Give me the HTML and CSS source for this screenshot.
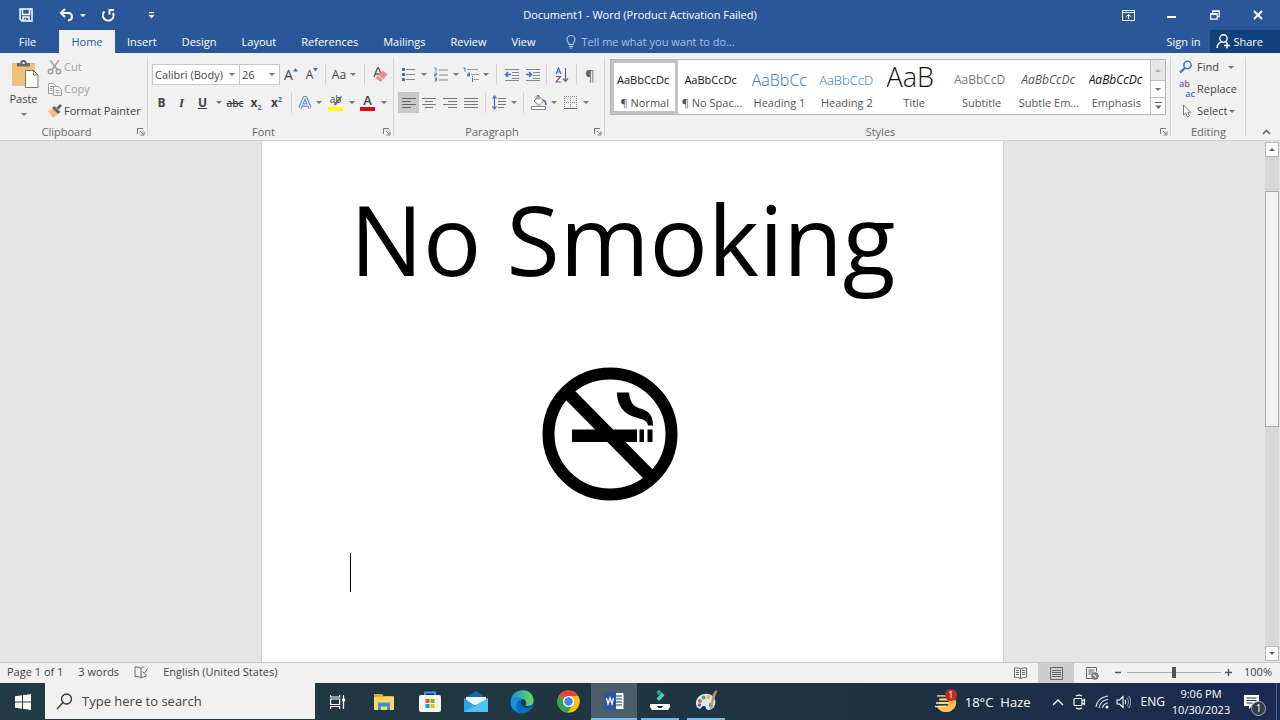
FILE: index.html
```html
<!DOCTYPE html>
<html lang="en">
<head>
<meta charset="utf-8">
<title>Document1 - Word</title>
<link rel="stylesheet" href="styles.css">
</head>
<body>
<header class="titlebar">
  <div class="quick">
    <button aria-label="Save"><svg width="14" height="14" viewBox="0 0 14 14" fill="none" stroke="#fff" stroke-width="1.5"><path d="M1 1h12v12H3L1 11z"/><path d="M3.500 1v5.500h7V1M4 13V9h6v4M6.500 10.500v2"/></svg></button>
    <button aria-label="Undo"><svg width="15" height="14" viewBox="0 0 15 14" fill="none" stroke="#fff" stroke-width="2"><path d="M6 1L2 5l4 4M2.500 5H9c5 0 5.500 7 0 7.500"/></svg></button>
    <button class="narrow" aria-label="Undo options"><i class="arrow"></i></button>
    <button aria-label="Redo"><svg width="15" height="15" viewBox="0 0 15 15" fill="none" stroke="#fff" stroke-width="2"><path d="M3.500 3.500A5.300 5.300 0 1 0 12 5M8.500 6.500V2H13"/></svg></button>
    <button aria-label="Customize toolbar"><svg width="7" height="7" viewBox="0 0 7 7" fill="#fff"><path d="M1 0h5v1.200H1zM0.500 3h6L3.500 6.500z"/></svg></button>
  </div>
  <h1 class="title">Document1 - Word (Product Activation Failed)</h1>
  <div class="window">
    <button aria-label="Ribbon display options"><svg width="13" height="11" viewBox="0 0 13 11" fill="none" stroke="#fff"><path d="M.5.5h12v10H.5zM.5 2.500h12M6.500 9V4.500M4.200 6.700l2.300-2.300 2.300 2.300"/></svg></button>
    <button aria-label="Minimize"><svg width="9" height="10" viewBox="0 0 9 10"><path d="M0 6h9v2H0z" fill="#fff"/></svg></button>
    <button aria-label="Restore"><svg width="10" height="10" viewBox="0 0 10 10" fill="none" stroke="#fff" stroke-width="1.200"><path d="M.6 3.600h6.500v5.500H.6zM.6 4.500h6.500M2.600 3V.8h6.600v5.800H7.500M2.600 1.500h6.600"/></svg></button>
    <button aria-label="Close"><svg width="10" height="10" viewBox="0 0 10 10"><path d="M1 1l8 8M9 1L1 9" stroke="#fff" stroke-width="2"/></svg></button>
  </div>
</header>
<nav class="tabs">
  <button class="file">File</button>
  <button class="active">Home</button>
  <button>Insert</button>
  <button>Design</button>
  <button>Layout</button>
  <button>References</button>
  <button>Mailings</button>
  <button>Review</button>
  <button>View</button>
  <label class="tell"><svg width="10" height="14" viewBox="0 0 10 14" fill="none" stroke="#a9c0e2" stroke-width="1.200"><path d="M3 9.500C3 7.500 1 7 1 4.500a4 4 0 0 1 8 0C9 7 7 7.500 7 9.500zM3 11.300h4M3.500 13h3"/></svg><input aria-label="Tell me" placeholder="Tell me what you want to do..."></label>
  <button class="sign">Sign in</button>
  <button class="share"><svg width="15" height="15" viewBox="0 0 15 15" fill="none" stroke="#fff" stroke-width="1.400"><circle cx="7.500" cy="4.500" r="3.700"/><path d="M1 14c.3-3.500 2-5.500 4.500-6.200M9.500 8l1.500 1.500M11 8.500v6M8 11.500h6"/></svg>Share</button>
</nav>
<section class="ribbon">
  <div class="group clipboard">
    <div class="body">
      <button class="paste"><svg width="28" height="30" viewBox="0 0 28 30"><path d="M1 4h23v23H1z" fill="#ecc27b"/><path d="M6 4h3.500V2.500L11 1h3l1.500 1.500V4H19v3.500H6z" fill="#6a6a6a"/><path d="M11.500 3h2v2h-2z" fill="#f1f1f1"/><path d="M14.500 11.500h8l4.500 4.500v12.500H14.500z" fill="#fff" stroke="#777"/><path d="M22.500 11.500V16H27" fill="none" stroke="#777"/></svg><span>Paste</span><i class="arrow"></i></button>
      <div class="list">
        <button class="off"><svg width="16" height="15" viewBox="0 0 16 15" fill="none" stroke="#a0a0a0" stroke-width="1.500"><path d="M3 0l7.500 10M12 0L5 10"/><circle cx="3.500" cy="11.500" r="2.200"/><circle cx="11.500" cy="11.500" r="2.200"/></svg>Cut</button>
        <button class="off"><svg width="16" height="15" viewBox="0 0 16 15" fill="#f5f5f5" stroke="#a0a0a0"><path d="M1.500 1.500h5l2 2v8h-7z"/><path d="M6.500 4.500h5l3 3v6h-8zM3 4.500h3M3 6.500h3M3 8.500h3M8.500 8.500h4M8.500 10.500h4"/></svg>Copy</button>
        <button><svg width="16" height="15" viewBox="0 0 16 15"><path d="M1 7l5-2 5 5-5 4z" fill="#ecc27b"/><path d="M5 4l2.500-2 6 6L11 10zM9.500 3.500L13 0l2 2-3.500 3.500z" fill="#666"/></svg>Format Painter</button>
      </div>
    </div>
    <footer><span>Clipboard</span><button class="launch" aria-label="Clipboard settings"><svg width="8" height="8" viewBox="0 0 8 8" fill="none" stroke="#777"><path d="M.5 6V.5H6M3 3l3 3M7 3.500V7H3.500"/></svg></button></footer>
  </div>

  <div class="group font">
    <div class="body rows">
      <div class="row font-a">
        <label class="combo"><select aria-label="Font"><option>Calibri (Body)</option></select><i class="arrow"></i></label>
        <label class="combo size"><select aria-label="Font size"><option>26</option></select><i class="arrow"></i></label>
        <button class="grow" aria-label="Grow font">A<svg width="5" height="4" viewBox="0 0 5 4"><path d="M0 3.500L2.500 0 5 3.500z" fill="#3e6db5"/></svg></button>
        <button class="grow shrink" aria-label="Shrink font">A<svg width="5" height="4" viewBox="0 0 5 4"><path d="M0 0h5L2.500 3.500z" fill="#3e6db5"/></svg></button>
        <i class="sep"></i>
        <button class="case">Aa<i class="arrow"></i></button>
        <i class="sep"></i>
        <button aria-label="Clear formatting"><svg width="16" height="16" viewBox="0 0 16 16"><path d="M2 10L5.500 1h1L9 7M3.500 7h4" fill="none" stroke="#555" stroke-width="1.300"/><path d="M10.500 3.500l5 4-7 7.500-5-4z" fill="#ec8797"/><path d="M6 8.500l5 4" stroke="#fff"/></svg></button>
      </div>
      <div class="row font-b">
        <button class="b">B</button><button class="i">I</button><button class="u">U</button><button aria-label="Underline options"><i class="arrow"></i></button>
        <button class="strike">abc</button><button class="b">x<sub>2</sub></button><button class="b">x<sup>2</sup></button><i class="sep"></i>
        <button aria-label="Text effects"><svg width="14" height="14" viewBox="0 0 14 14" fill="none" stroke-linejoin="round"><path d="M2 12L6.500 1.500h1L12 12M4 9h6" stroke="#5a8fcc" stroke-width="3.500"/><path d="M2 12L6.500 1.500h1L12 12M4 9h6" stroke="#fff" stroke-width="1.200"/></svg></button><button aria-label="Effects options"><i class="arrow"></i></button>
        <button class="marker" aria-label="Highlight">ab<svg width="16" height="15" viewBox="0 0 16 15"><path d="M0 11h15v4H0z" fill="#ffff00"/><path d="M14 1L8 9l-2 .5.500-2.500L13 0z" fill="#666"/></svg></button><button aria-label="Highlight options"><i class="arrow"></i></button>
        <button class="color">A</button><button aria-label="Color options"><i class="arrow"></i></button>
      </div>
    </div>
    <footer><span>Font</span><button class="launch" aria-label="Font settings"><svg width="8" height="8" viewBox="0 0 8 8" fill="none" stroke="#777"><path d="M.5 6V.5H6M3 3l3 3M7 3.500V7H3.500"/></svg></button></footer>
  </div>

  <div class="group para">
    <div class="body rows">
      <div class="row para-a">
        <button aria-label="Bullets"><svg width="14" height="15" viewBox="0 0 14 15"><path d="M5 2.500h9M5 7.500h9M5 12.500h9" stroke="#888"/><path d="M1 1h3v3H1zM1 6h3v3H1zM1 11h3v3H1z" fill="#3e6db5"/></svg></button><button aria-label="Bullet options"><i class="arrow"></i></button>
        <button aria-label="Numbering"><svg width="14" height="15" viewBox="0 0 14 15"><path d="M5 3h9M5 8h9M5 13h9" stroke="#888"/><path d="M.5 1H2v3.500M.5 6h2v1.500h-2V9h2M.5 11h2v3h-2M1 12.500h1" fill="none" stroke="#3e6db5" stroke-width=".9"/></svg></button><button aria-label="Number options"><i class="arrow"></i></button>
        <button aria-label="Multilevel list"><svg width="16" height="15" viewBox="0 0 16 15"><path d="M4 2.500h11M8 7.500h8M11 12.500h5" stroke="#999"/><path d="M.5 1H2v3.500M4.500 6h2v3h-2V7.500h2M9.500 9v1M9.500 11v4" fill="none" stroke="#3e6db5"/></svg></button><button aria-label="List options"><i class="arrow"></i></button>
        <i class="sep"></i>
        <button aria-label="Decrease indent"><svg width="16" height="14" viewBox="0 0 16 14"><path d="M1 1.500h14M8 4.500h7M8 7.500h7M8 10.500h7M1 12.500h14" stroke="#888"/><path d="M7 6.500H2M4 4L1.500 6.500 4 9" fill="none" stroke="#3e6db5" stroke-width="1.500"/></svg></button>
        <button aria-label="Increase indent"><svg width="16" height="14" viewBox="0 0 16 14"><path d="M1 1.500h14M8 4.500h7M8 7.500h7M8 10.500h7M1 12.500h14" stroke="#888"/><path d="M1 6.500h5M4 4l2.500 2.500L4 9" fill="none" stroke="#3e6db5" stroke-width="1.500"/></svg></button>
        <i class="sep"></i>
        <button aria-label="Sort"><svg width="14" height="16" viewBox="0 0 14 16" fill="none"><path d="M1 7l2.500-6L6 7M2 5h3" stroke="#3e6db5" stroke-width="1.200"/><path d="M1 9.500h4.500L1 15h5" stroke="#8a55a5" stroke-width="1.200"/><path d="M10.500 1v13M8 11.500l2.500 3 2.500-3" stroke="#666" stroke-width="1.200"/></svg></button>
        <i class="sep"></i>
        <button class="mark">¶</button>
      </div>
      <div class="row para-b">
        <button class="on" aria-label="Align left"><svg width="14" height="12" viewBox="0 0 14 12"><path d="M0 1.500h14M0 4.500h9M0 7.500h14M0 10.500h9" stroke="#666"/></svg></button>
        <button aria-label="Center"><svg width="14" height="12" viewBox="0 0 14 12"><path d="M0 1.500h14M3 4.500h8M0 7.500h14M3 10.500h8" stroke="#777"/></svg></button>
        <button aria-label="Align right"><svg width="14" height="12" viewBox="0 0 14 12"><path d="M0 1.500h14M5 4.500h9M0 7.500h14M5 10.500h9" stroke="#777"/></svg></button>
        <button aria-label="Justify"><svg width="14" height="12" viewBox="0 0 14 12"><path d="M0 1.500h14M0 4.500h14M0 7.500h14M0 10.500h14" stroke="#777"/></svg></button>
        <i class="sep"></i>
        <button aria-label="Line spacing"><svg width="14" height="15" viewBox="0 0 14 15"><path d="M6 3.500h8M6 6.500h8M6 9.500h8M6 12.500h6" stroke="#777"/><path d="M2.500 1v13M.5 3.500l2-2.500 2 2.500M.5 11.500l2 2.500 2-2.500" fill="none" stroke="#3e6db5" stroke-width="1.200"/></svg></button><button aria-label="Spacing options"><i class="arrow"></i></button>
        <i class="sep"></i>
        <button aria-label="Shading"><svg width="16" height="15" viewBox="0 0 16 15"><path d="M3 6l5-4.500L12.500 6 8 10.500zM6 4V.5h2V5" fill="#fff" stroke="#777"/><path d="M12 5c3 1 3 3 2.500 5" fill="none" stroke="#3e6db5" stroke-width="1.500"/><path d="M.5 11.500h14v3H.5z" fill="#fff" stroke="#888"/></svg></button><button aria-label="Shading options"><i class="arrow"></i></button>
        <button aria-label="Borders"><svg width="13" height="13" viewBox="0 0 13 13"><path d="M0 .5h13M0 6.500h13M.5 0v13M6.500 0v13M12.500 0v13" fill="none" stroke="#888" stroke-dasharray="1 1"/><path d="M0 12.500h13" stroke="#666"/></svg></button><button aria-label="Border options"><i class="arrow"></i></button>
      </div>
    </div>
    <footer><span>Paragraph</span><button class="launch" aria-label="Paragraph settings"><svg width="8" height="8" viewBox="0 0 8 8" fill="none" stroke="#777"><path d="M.5 6V.5H6M3 3l3 3M7 3.500V7H3.500"/></svg></button></footer>
  </div>

  <div class="group styles">
    <div class="body">
      <div class="gallery">
        <button class="picked"><b>AaBbCcDc</b><span>¶ Normal</span></button>
        <button><b>AaBbCcDc</b><span>¶ No Spac...</span></button>
        <button class="h-one"><b>AaBbCc</b><span>Heading 1</span></button>
        <button class="h-two"><b>AaBbCcD</b><span>Heading 2</span></button>
        <button class="big"><b>AaB</b><span>Title</span></button>
        <button class="sub"><b>AaBbCcD</b><span>Subtitle</span></button>
        <button class="subtle"><b>AaBbCcDc</b><span>Subtle Em...</span></button>
        <button class="emph"><b>AaBbCcDc</b><span>Emphasis</span></button>
        <div class="more">
          <button class="dim" aria-label="Previous styles"><i class="arrow up"></i></button>
          <button aria-label="Next styles"><i class="arrow"></i></button>
          <button aria-label="All styles"><svg width="7" height="8" viewBox="0 0 7 8" fill="#666"><path d="M0 0h7v1H0zM.5 3.500h6l-3 3.500z"/></svg></button>
        </div>
      </div>
    </div>
    <footer><span>Styles</span><button class="launch" aria-label="Style settings"><svg width="8" height="8" viewBox="0 0 8 8" fill="none" stroke="#777"><path d="M.5 6V.5H6M3 3l3 3M7 3.500V7H3.500"/></svg></button></footer>
  </div>

  <div class="group editing">
    <div class="body">
      <div class="list">
        <button><svg width="14" height="14" viewBox="0 0 14 14" fill="none" stroke="#3e6db5"><circle cx="8.500" cy="5" r="3.700" stroke-width="1.400"/><path d="M6 8l-5 4.500" stroke-width="2.200"/></svg>Find<i class="arrow far"></i></button>
        <button><span class="swap"><span>ab</span><span>ac</span></span>Replace</button>
        <button><svg width="14" height="14" viewBox="0 0 14 14" fill="#fff" stroke="#777"><path d="M4.500 1v10l2.300-2 1.700 4 2-1-1.800-3.700h3z"/></svg>Select<i class="arrow"></i></button>
      </div>
    </div>
    <footer><span>Editing</span></footer>
  </div>
  <button class="collapse" aria-label="Collapse ribbon"><svg width="9" height="6" viewBox="0 0 9 6"><path d="M1 5l3.500-3.500L8 5" fill="none" stroke="#666" stroke-width="1.700"/></svg></button>
</section>

<main class="workspace">
  <div class="desk">
    <article class="page">
      <p class="headline">No Smoking</p>
      <svg class="sign-mark" width="136" height="136" viewBox="0 0 136 136" role="img" aria-label="No smoking sign">
        <ellipse cx="68" cy="68" rx="61.500" ry="60.500" fill="none" stroke="#000" stroke-width="12"/>
        <path d="M30 63.500h65v12.500H30zM97.500 63.500h4.500V76h-4.500zM105.500 63.500h5V76h-5z"/>
        <path d="M75 26.500h12c1 9 4 14 11 16 8 2 13 6 13 17h-5c-1-5-4-6-12-8-12-3-19-12-19-25z"/>
        <path d="M28 29L109 111" stroke="#000" stroke-width="13" fill="none"/>
      </svg>
      <div class="caret"></div>
    </article>
  </div>
  <div class="scroll">
    <button aria-label="Scroll up"><i class="arrow up"></i></button>
    <div class="track"><div class="thumb"></div></div>
    <button aria-label="Scroll down"><i class="arrow"></i></button>
  </div>
</main>

<footer class="status">
  <span>Page 1 of 1</span><span>3 words</span>
  <svg width="14" height="13" viewBox="0 0 14 13" fill="none" stroke="#666"><path d="M7 2.500C5 1 3 1 1 1v9.500c2 0 4 0 6 1.500V2.500c1-1 2-1.500 3.500-1.500M7 12c1.500-1.200 3-1.500 5-1.500V8M8.500 5.500l2 2 3-5"/></svg>
  <span>English (United States)</span>
  <div class="views">
    <button aria-label="Read mode"><svg width="13" height="12" viewBox="0 0 13 12" fill="none" stroke="#666"><path d="M6.500 2C4.500.8 2.500.8.500.8v9.500c2 0 4 .2 6 1.200 2-1 4-1.200 6-1.200V.8c-2 0-4 0-6 1.200zM6.500 2v9M2 3.500h3M2 5.500h3M2 7.500h3M8 3.500h3M8 5.500h3M8 7.500h3"/></svg></button>
    <button class="on" aria-label="Print layout"><svg width="13" height="13" viewBox="0 0 13 13" fill="none" stroke="#666"><path d="M.5.5h12v12H.5zM2 3.500h9M2 5.500h9M2 7.500h9M2 9.500h9"/></svg></button>
    <button aria-label="Web layout"><svg width="13" height="13" viewBox="0 0 13 13" fill="none" stroke="#666"><path d="M6 11.500H.5V.5h10v4M2.500 3h6M2.500 5h5M2.500 7h3"/><circle cx="9" cy="9" r="3.300" fill="#888"/><path d="M7 8l2 .5 1 2" stroke="#fff"/></svg></button>
  </div>
  <button class="zoom" aria-label="Zoom out"><svg width="7" height="7" viewBox="0 0 7 7"><path d="M0 3.500h6" stroke="#555" stroke-width="1.500"/></svg></button>
  <input type="range" aria-label="Zoom" min="0" max="100" value="50">
  <button class="zoom" aria-label="Zoom in"><svg width="7" height="7" viewBox="0 0 7 7"><path d="M0 3.500h7M3.500 0v7" stroke="#555" stroke-width="1.500"/></svg></button>
  <span class="percent">100%</span>
</footer>

<footer class="taskbar">
  <button class="start" aria-label="Start"><svg width="16" height="16" viewBox="0 0 16 16" fill="#fff"><path d="M0 2.300l7-1v6.200H0zM8 1.200L16 0v7.500H8zM0 8.500h7v6.200l-7-1zM8 8.500h8V16l-8-1.200z"/></svg></button>
  <label class="search"><svg width="17" height="17" viewBox="0 0 17 17" fill="none" stroke="#333" stroke-width="1.300"><circle cx="10.500" cy="6" r="5"/><path d="M7 9.500L1 16"/></svg><input aria-label="Search" placeholder="Type here to search"></label>
  <button aria-label="Task view"><svg width="16" height="16" viewBox="0 0 16 16" fill="none" stroke="#fff" stroke-width="1.200"><path d="M.6 1v2h9V1M.6 15v-2.500h9V15M.6 5h9v5.500h-9zM13.500 1v14"/><path d="M12 4.500h3v3h-3z" fill="#fff" stroke="none"/></svg></button>
  <button aria-label="File Explorer"><svg width="22" height="18" viewBox="0 0 22 18"><path d="M1 1h8l1.500 2H21v14H1z" fill="#e7a62f"/><path d="M1 4h20v13H1z" fill="#ffd668"/><path d="M5 9.500h12V17h-3v-3.500H8V17H5z" fill="#3f93cb"/></svg></button>
  <button aria-label="Store"><svg width="22" height="22" viewBox="0 0 22 22"><path d="M6 5V1.500h10V5" fill="none" stroke="#35a5e5" stroke-width="1.800"/><rect x="0" y="4" width="22" height="17" rx="2" fill="#f4f4f4"/><path d="M6.500 8h4v4h-4z" fill="#f25022"/><path d="M11.500 8h4v4h-4z" fill="#7fba00"/><path d="M6.500 13h4v4h-4z" fill="#00a4ef"/><path d="M11.500 13h4v4h-4z" fill="#ffb900"/></svg></button>
  <button aria-label="Mail"><svg width="24" height="21" viewBox="0 0 24 21"><path d="M0 8L12 0l12 8v3H0z" fill="#1566b7"/><path d="M2 6h20v8H2z" fill="#f5f9fc"/><path d="M0 7l12 8.500L24 7v14H0z" fill="#2ca4e8"/><path d="M0 21L24 7v14z" fill="#50c2f5"/></svg></button>
  <button aria-label="Edge"><svg width="24" height="24" viewBox="0 0 24 24"><defs><linearGradient id="edge-top"><stop stop-color="#168fd5"/><stop offset="1" stop-color="#66dc59"/></linearGradient></defs><circle cx="12" cy="12" r="11.500" fill="#0c69bd"/><path d="M1 11C2-3 23-3 23.500 10c.2 5-4 7-8.500 5.500 2-2 1-6.500-3-6.500-6 0-9 7-4 13C2 20 0 15 1 11z" fill="url(#edge-top)"/><path d="M1 11c2-5 9-5 11-2-6 1-7 8-4 13C3 20 1 16 1 11z" fill="#158fd9"/><path d="M12 9c4 0 5 4.500 3 6.500 3 1.500 6 1 8-.5-1.500 2-4 3-7 2.500-5-1-6-6-4-8.500z" fill="#203642"/></svg></button>
  <button aria-label="Chrome"><svg width="23" height="23" viewBox="0 0 24 24"><circle cx="12" cy="12" r="11.500" fill="#fbc116"/><path d="M12 12L2 6.200A11.500 11.500 0 0 1 22 6.300H12z" fill="#e84335"/><path d="M12 12L2 6.200A11.500 11.500 0 0 0 11.500 23.500L17 14.500z" fill="#35a452"/><path d="M12 6.300h10a11.500 11.500 0 0 1-10.500 17.200L17 14.700z" fill="#fbc116"/><circle cx="12" cy="12" r="5.800" fill="#fff"/><circle cx="12" cy="12" r="4.400" fill="#4285f4"/></svg></button>
  <button class="running current" aria-label="Word"><svg width="20" height="20" viewBox="0 0 20 20"><path d="M9 2h10.500v16H9z" fill="#fff"/><path d="M12 5h6M12 8h6M12 11h6M12 14h6" stroke="#5279b5" stroke-width="1.300"/><path d="M0 2l12-2v20L0 18z" fill="#2b579a"/><path d="M2.500 7l1.500 6 2-6 2 6 1.500-6" fill="none" stroke="#fff" stroke-width="1.300"/></svg></button>
  <button class="running" aria-label="Filmora"><svg width="20" height="21" viewBox="0 0 20 21"><path d="M6.500 2.500L9 0l5.500 5.200L9 11 6.500 8.500 9.500 5.500z" fill="#47d2bf"/><path d="M6.500 2.500L9 0l3 3-2.500 2.500z" fill="#27998e"/><path d="M0 14h20v3l-2 3H2l-2-3z" fill="#fff"/><path d="M7 16h6l-1.500 2h-3z" fill="#222"/></svg></button>
  <button class="running" aria-label="Paint"><svg width="23" height="22" viewBox="0 0 23 22"><path d="M1 14C0 7 9 1 16 5c7 4 5 14-2 15-4 .5-2-4-5-4s-3 4-5 2.500C2 18 1.200 16 1 14z" fill="#d9e8f0"/><circle cx="5" cy="11" r="1.900" fill="#df5047"/><circle cx="8.500" cy="7.500" r="1.900" fill="#48ae50"/><circle cx="13.500" cy="7" r="1.900" fill="#f1b82d"/><circle cx="4.500" cy="15" r="1.700" fill="#7e57b5"/><circle cx="16" cy="15" r="2.200" fill="#3498d8"/><path d="M18 4l3-4 1.500 1-2 4-4 14-2-1z" fill="#c79664"/></svg></button>
  <div class="tray">
    <button class="weather"><svg width="24" height="22" viewBox="0 0 24 22"><path d="M5 14C3 4 20 0 22 10c1 6-4 11-10 11-4 0-7-1.500-9-5z" fill="#f5ad35"/><path d="M3 15c6 3 13 0 19-5 1 6-4 11-10 11-4 0-7-2-9-6z" fill="#ffc15a"/><path d="M3 5h9M5 8.500h8M2 12h13M1 15.500h11" stroke="#ffe3a3" stroke-width="1.600"/><path d="M3 6.500h10M3 10.200h12M2 13.800h12" stroke="#24384b" stroke-width="1.400"/></svg><span class="alert">1</span><span>18°C</span><span>Haze</span></button>
    <button class="small" aria-label="Hidden icons"><svg width="12" height="8" viewBox="0 0 12 8"><path d="M1 7l5-5 5 5" fill="none" stroke="#fff" stroke-width="1.300"/></svg></button>
    <button class="small" aria-label="Meet now"><svg width="13" height="16" viewBox="0 0 13 16" fill="none" stroke="#fff" stroke-width="1.200"><rect x="1" y="4.500" width="8" height="7" rx="1"/><path d="M9 7l2.500-1.500v5L9 9M3 2c2-1.200 4-1.200 6 0M3 14c2 1.200 4 1.200 6 0"/></svg></button>
    <button class="small" aria-label="Network"><svg width="14" height="14" viewBox="0 0 14 14" fill="none" stroke="#dce3ee" stroke-width="1.200"><path d="M1 12C2 6 6 2 13 1M4 13c1-5 4-8 9-8.500M7.500 13c.5-3 2-4.500 5.500-5"/><circle cx="12" cy="12" r="1.500" fill="#fff" stroke="none"/></svg></button>
    <button class="small" aria-label="Volume"><svg width="15" height="14" viewBox="0 0 15 14" fill="none" stroke="#fff" stroke-width="1.100"><path d="M1 5h2.500L7 1.500v11L3.500 9H1zM9 5c1 1 1 3 0 4"/><path d="M11 3c2 2 2 6 0 8M12.500 1c3 3 3 9 0 12" stroke="#8a98ad"/></svg></button>
    <button class="lang">ENG</button>
    <button class="clock"><span>9:06 PM</span><span>10/30/2023</span></button>
    <button class="notice" aria-label="Notifications"><svg width="17" height="16" viewBox="0 0 17 16"><path d="M1 1h15v11H9l-3 3v-3H1z" fill="#fff"/><path d="M3.500 4h10M3.500 6.500h10M3.500 9h6" stroke="#1c2b4d"/></svg><span class="count">1</span></button>
  </div>
</footer>
</body>
</html>
```
FILE: styles.css
```css
* { box-sizing: border-box; }
body {
  margin: 0;
  height: 100vh;
  display: flex;
  flex-direction: column;
  overflow: hidden;
  font: 11px/16px "Open Sans", "Noto Sans", sans-serif;
  color: #444;
}
button, input, select {
  font: inherit;
  color: inherit;
  background: none;
  border: 0;
  padding: 0;
  margin: 0;
  outline: 0;
}
button { display: flex; align-items: center; justify-content: center; white-space: nowrap; }
svg { display: block; flex: none; }
.arrow {
  flex: none;
  border: 3px solid transparent;
  border-top-color: currentColor;
  border-bottom: 0;
}
.arrow.up { border-top: 0; border-bottom: 3px solid currentColor; }
.ribbon .arrow { color: #777; }

.titlebar {
  display: grid;
  grid-template-columns: 1fr auto 1fr;
  align-items: center;
  height: 30px;
  background: #2a579a;
  color: #fff;
}
.title { margin: 0; font-size: 11px; font-weight: 400; }
.quick { display: flex; padding-left: 5px; }
.quick button { width: 41px; height: 28px; }
.quick .narrow { width: 12px; margin: 0 -1px 0 -10px; }
.quick button:last-child { margin-left: 2px; }
.window { display: flex; justify-content: flex-end; padding-right: 1px; }
.window button { width: 43px; height: 28px; }

.tabs { display: flex; height: 23px; background: #2a579a; color: #fff; }
.tabs button { padding: 0 13px; }
.tabs .file { width: 55px; margin-right: 4px; }
.tabs .active { width: 56px; background: #f1f1f1; color: #2a579a; }
.tabs .active ~ button:not(.sign):not(.share) { padding: 0 13px 0 12px; }
.tell { flex: 1; display: flex; align-items: center; gap: 5px; padding-left: 18px; }
.tell input { flex: 1; min-width: 0; }
.tell input::placeholder { color: #a9c0e2; opacity: 1; }
.tabs .sign { padding: 0 10px; }
.tabs .share { gap: 2px; padding: 0 17px 0 6px; background: #12417a; }

.ribbon {
  display: flex;
  height: 88px;
  background: #f1f1f1;
  border-bottom: 1px solid #d2d2d2;
}
.group { display: flex; flex-direction: column; position: relative; }
.group::after {
  content: "";
  position: absolute;
  right: 0;
  top: 4px;
  bottom: 4px;
  border-right: 1px solid #d4d4d4;
}
.group .body { flex: 1; display: flex; }
.group > footer { display: flex; align-items: center; height: 16px; color: #666; }
.group > footer span { flex: 1; text-align: center; }
.launch { width: 15px; height: 16px; }
.clipboard { width: 148px; }
.font { width: 246px; }
.para { width: 211px; }
.styles { flex: 1; min-width: 0; }
.editing { width: 75px; }
.paste { flex-direction: column; justify-content: flex-start; width: 47px; padding-top: 6px; }
.paste span { margin: 2px 0 6px; }
.paste svg { margin-left: 3px; }
.list { padding-top: 3px; }
.list button { height: 22px; gap: 1px; }
.list .off { color: #a0a0a0; }
.rows { flex-direction: column; gap: 7px; padding: 11px 0 0 4px; }
.row { display: grid; height: 21px; }
.font-a { grid-template-columns: 88px 40px 22px 20px 6px 32px 8px 24px; }
.font-b { grid-template-columns: 19px 21px 21px 11px 22px 20px 21px 8px 19px 10px 23px 10px 21px 11px; }
.para-a { grid-template-columns: 20px 12px 21px 10px 20px 10px 10px 21px 21px 7px 24px 5px 22px; }
.para-b { grid-template-columns: 21px 20px 21px 21px 8px 20px 9px 11px 20px 10px 22px 10px; }
.sep { justify-self: center; border-right: 1px solid #d4d4d4; }
.row .on { background: #c8c8c8; }
.combo { position: relative; display: flex; background: #fff; border: 1px solid #c6c6c6; }
.combo select { appearance: none; width: 100%; padding-left: 2px; }
.combo .arrow { position: absolute; right: 4px; top: 8px; pointer-events: none; }
.size { border-left: 0; }
.grow { font-size: 14px; align-items: center; }
.grow svg { margin-bottom: 10px; }
.shrink { font-size: 12px; }
.case { font-size: 12px; gap: 4px; }
.b { font-weight: 700; font-size: 12px; }
.i { font: italic 700 13px "Liberation Serif", serif; }
.u { font-weight: 700; font-size: 12px; text-decoration: underline; }
.strike { font-weight: 600; font-size: 10px; text-decoration: line-through; }
sub, sup { font-size: 7px; line-height: 7px; color: #3e6db5; }
sub { align-self: flex-end; margin-bottom: 2px; }
sup { align-self: flex-start; margin-top: 4px; }
.marker { position: relative; align-items: flex-start; font-size: 10px; line-height: 14px; }
.marker svg { position: absolute; left: 4px; bottom: 2px; }
.color { align-self: center; justify-self: center; width: 15px; height: 17px; border-bottom: 4px solid #e30613; font-size: 13px; font-weight: 600; line-height: 13px; }
.mark { font-size: 15px; color: #666; }

.styles .body { padding: 6px 5px 0 5px; }
.gallery {
  flex: 1;
  display: grid;
  grid-template-columns: repeat(8, minmax(0, 1fr)) 15px;
  height: 56px;
  background: #fff;
  border: 1px solid #b4b4b4;
}
.gallery > button { flex-direction: column; justify-content: flex-start; padding: 0 6px; overflow: hidden; color: #555; }
.gallery > .picked { box-shadow: inset 0 0 0 3px #c3c3c3; }
.gallery b { width: 100%; height: 35px; overflow: hidden; font-weight: 400; font-size: 11px; line-height: 40px; text-align: left; color: #111; }
.gallery .h-one b { font-size: 16px; font-weight: 300; color: #2e74b5; }
.gallery .h-two b { font-size: 13px; font-weight: 300; color: #2e74b5; }
.gallery .big b { font-size: 27px; font-weight: 300; line-height: 33px; }
.gallery .sub b { font-size: 12px; color: #777; }
.gallery .subtle b { font-style: italic; font-size: 12px; color: #555; }
.gallery .emph b { font-style: italic; font-size: 12px; }
.more { display: grid; grid-template-rows: 20px 1fr 1fr; border-left: 1px solid #c0c0c0; }
.more button + button { border-top: 1px solid #c0c0c0; }
.more .dim { background: #e6e6e6; }
.more .dim .arrow { color: #aaa; }
.editing .list { padding-left: 8px; }
.editing .list button { gap: 2px; }
.editing .list svg { margin-right: 2px; }
.list .far { margin-left: 7px; }
.swap { display: flex; flex-direction: column; width: 16px; font-size: 9px; font-weight: 600; line-height: 10px; text-align: left; color: #8150a0; }
.swap span + span { text-align: right; color: #3e6db5; }
.collapse { width: 34px; height: 16px; margin-top: auto; padding-left: 6px; }

.workspace { flex: 1; display: flex; min-height: 0; background: #e5e5e5; }
.desk { flex: 1; display: flex; justify-content: center; overflow: hidden; }
.page { width: 743px; padding: 29px 88px 0; background: #fff; border: 1px solid #d0d0d0; border-width: 0 1px; color: #000; }
.headline { margin: 0; font-size: 97px; line-height: 136px; white-space: nowrap; }
.sign-mark { margin: 60px 0 51px 192px; }
.caret { width: 1px; height: 39px; background: #000; }
.scroll { display: flex; flex-direction: column; width: 15px; padding: 1px 1px 1px 0; background: #e5e5e5; color: #666; }
.scroll button { height: 15px; background: #fff; border: 1px solid #b5b5b5; }
.track { flex: 1; display: flex; flex-direction: column; background: #d8d8d8; }
.track::before { content: ""; flex: 34; }
.thumb { flex: 235; background: #f1f1f1; border: 1px solid #acacac; }
.track::after { content: ""; flex: 220; }

.status { display: flex; align-items: center; height: 21px; padding: 0 8px 2px 7px; background: #f1f1f1; border-top: 1px solid #c6c6c6; gap: 15px; }
.views { display: flex; margin: 0 -3px -2px auto; align-self: stretch; }
.views button { width: 36px; }
.views .on { background: #cdcdcd; }
.zoom { width: 7px; height: 16px; margin: 0 -10px 0 -11px; }
.status input { appearance: none; width: 94px; height: 12px; margin: 0; background: linear-gradient(#aaa, #aaa) center / 100% 1px no-repeat; }
.status input::-webkit-slider-thumb { appearance: none; width: 4px; height: 11px; background: #555; }
.views + .zoom { margin-left: -7px; }
.percent { margin-left: 7px; }

.taskbar { display: flex; height: 37px; background: linear-gradient(90deg, #213a43, #203642 50%, #1d2f45 78%, #1b2a52); color: #fff; }
.taskbar > button { width: 46px; }
.taskbar > .start { width: 45px; }
.search { display: flex; align-items: center; gap: 9px; width: 270px; margin-bottom: 1px; padding-left: 11px; background: #f1f1f1; color: #444; font-size: 13px; }
.search input { flex: 1; min-width: 0; }
.search input::placeholder { color: #444; opacity: 1; }
.running { border-bottom: 2px solid #76b9ed; background-clip: padding-box; }
.taskbar > .running:not(.current) { width: 38px; margin: 0 4px; }
.current { background: #4c5e6a; }
.tray { display: flex; margin-left: auto; padding-right: 3px; margin-right: 3px; border-right: 1px solid #56637c; font-size: 12px; }
.weather { position: relative; gap: 7px; font-size: 13px; margin-right: 16px; }
.alert { position: absolute; left: 11px; top: 6px; width: 12px; height: 12px; border-radius: 50%; background: #c42b1c; font-size: 9px; line-height: 12px; }
.small { width: 22px; }
.lang { padding: 0 8px 0 6px; }
.clock { flex-direction: column; width: 56px; font-size: 11px; }
.notice { position: relative; width: 44px; }
.count { position: absolute; left: 22px; top: 18px; width: 15px; height: 15px; border: 1px solid #aaa; border-radius: 50%; background: #333b4c; font-size: 10px; line-height: 13px; }
```
